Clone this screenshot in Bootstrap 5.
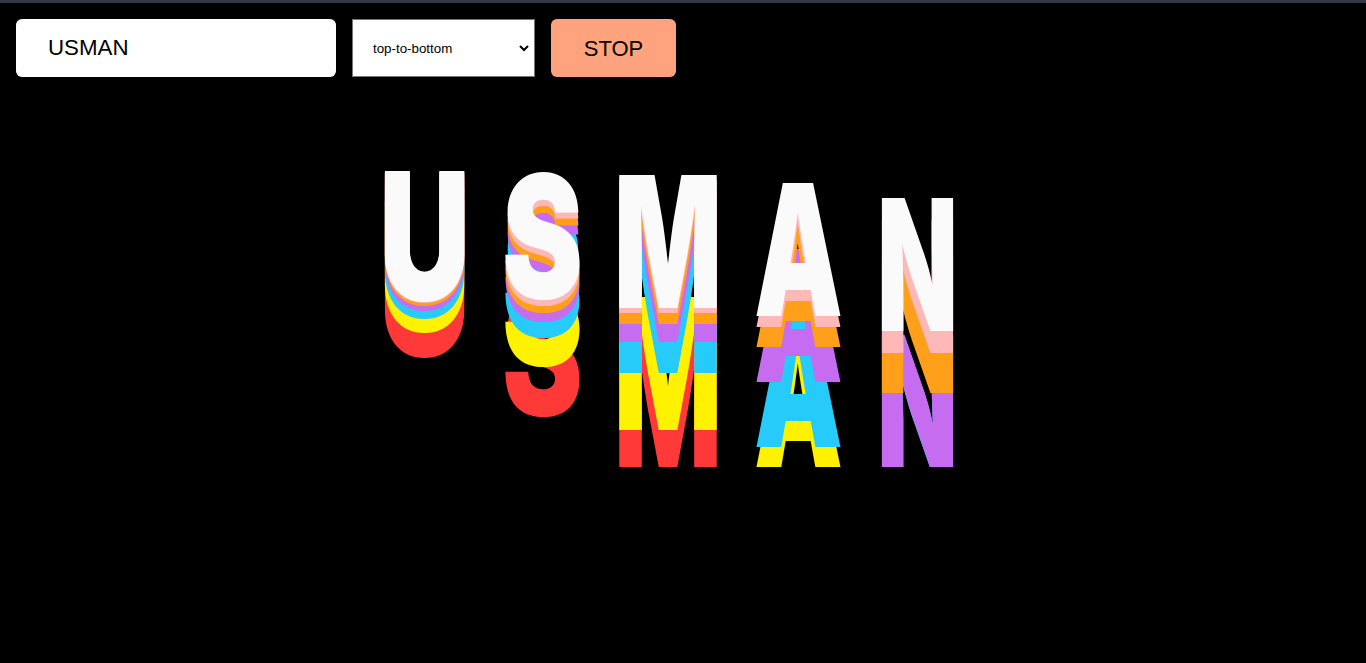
<!doctype html><html lang="en"><head><meta charset="utf-8"><title>USMAN</title><link href="https://cdn.jsdelivr.net/npm/bootstrap@5.3.0/dist/css/bootstrap.min.css" rel="stylesheet"><style>
html,body{height:100%;overflow:hidden}
body{background:#000;border-top:3px solid #323848;font-family:"Liberation Sans",Arial,sans-serif}
.toolbar{padding:16px 16px 16px;gap:16px}
.word-input.form-control{width:320px;height:58px;border:0;border-radius:6px;padding:0 0 0 32px;font-size:22.3px;color:#000;font-family:inherit;background:#fff;box-shadow:none}
.dir-select.form-select{--bs-form-select-bg-img:url("data:image/svg+xml,%3csvg xmlns='http://www.w3.org/2000/svg' viewBox='0 0 10 10'%3e%3cpath fill='none' stroke='%23000' stroke-width='2' d='M1 3l4 4 4-4'/%3e%3c/svg%3e");width:183px;height:58px;border:1px solid #767676;border-radius:0;padding:2px 0 0 20px;font-size:13.33px;color:#000;font-family:inherit;background-position:right 5px center;background-size:10px 10px;box-shadow:none}
.stop-btn.btn{width:125px;height:58px;border:0;border-radius:6px;background:#ffa27e;color:#000;font-size:22px;font-family:inherit;padding:0}
.stage{height:374px;overflow:hidden;padding-left:379px}
.glyph{display:block;font-family:Inter,"Liberation Sans",sans-serif;font-weight:900;font-size:183px;line-height:1;color:#fbfafa;transform-origin:0 0;flex:none;white-space:nowrap}
.g-u{width:80px;margin-top:54px;transform:scale(.69,.97);text-shadow:0 1px #ffb8b8,0 4px #ff9f1a,0 9.3px #c56cf0,0 17.5px #27cbfa,0 32px #fff200,0 57.7px #ff3838}
.g-s{width:74px;margin-left:43px;margin-top:57px;transform:scale(.664,.935);text-shadow:0 6.4px #ffb8b8,0 13.9px #ff9f1a,0 23.5px #c56cf0,0 40.6px #27cbfa,0 71.7px #fff200,0 125px #ff3838}
.g-m{width:97px;margin-left:38px;margin-top:57px;transform:scale(.617,1);text-shadow:0 5px #ffb8b8,0 16px #ff9f1a,0 34px #c56cf0,0 65px #27cbfa,0 122px #fff200,0 159px #ff3838}
.g-a{width:83px;margin-left:43px;margin-top:65px;transform:scale(.611,1);text-shadow:0 11px #ffb8b8,0 31px #ff9f1a,0 66px #c56cf0,0 131px #27cbfa,0 151px #fff200}
.g-n{width:72px;margin-left:40px;margin-top:80px;transform:scale(.575,1);text-shadow:0 22px #ffb8b8,0 62px #ff9f1a,0 137px #c56cf0,0 138px #27cbfa}
</style></head><body>
<form class="toolbar d-flex align-items-start" onsubmit="return false">
<input class="form-control word-input" type="text" value="USMAN" aria-label="Text">
<select class="form-select dir-select" aria-label="Direction"><option>top-to-bottom</option><option>bottom-to-top</option></select>
<button class="btn stop-btn" type="button">STOP</button>
</form>
<div class="stage d-flex align-items-start" aria-label="USMAN">
<span class="glyph g-u">U</span><span class="glyph g-s">S</span><span class="glyph g-m">M</span><span class="glyph g-a">A</span><span class="glyph g-n">N</span>
</div>
</body></html>
